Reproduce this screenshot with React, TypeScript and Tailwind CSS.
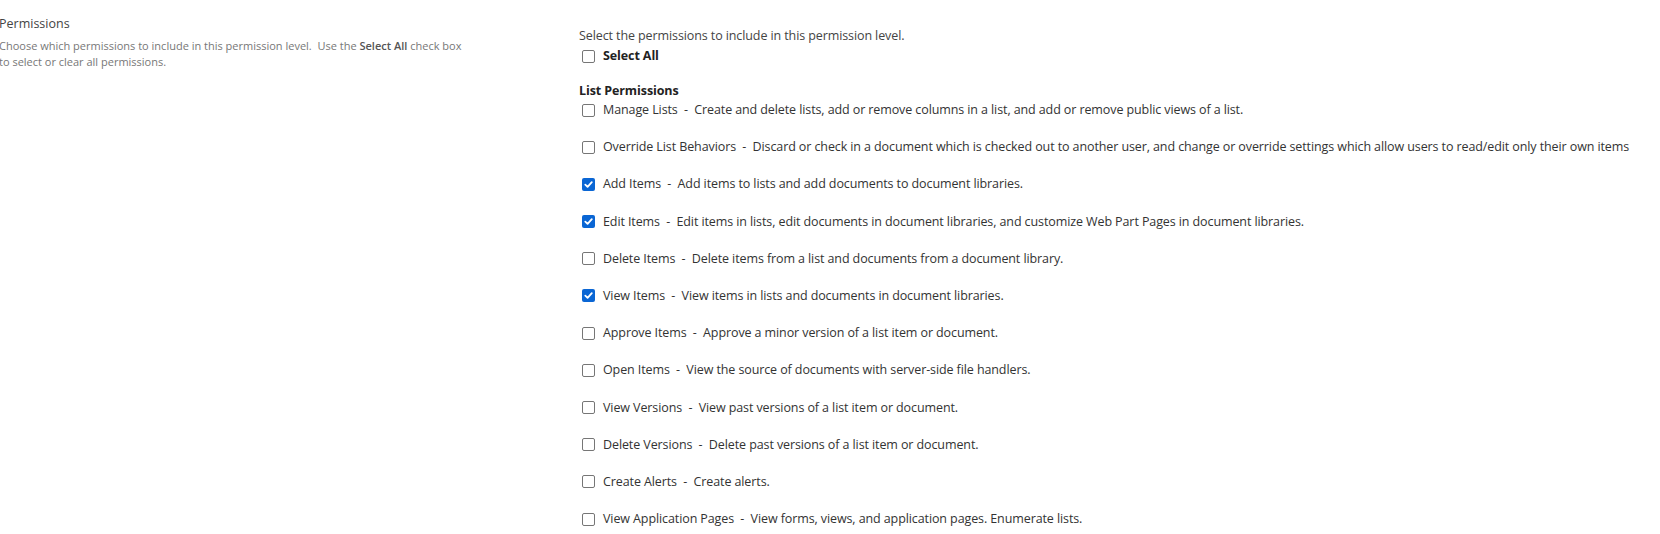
const permissions = [
  { name: 'Manage Lists', desc: 'Create and delete lists, add or remove columns in a list, and add or remove public views of a list.', checked: false },
  { name: 'Override List Behaviors', desc: 'Discard or check in a document which is checked out to another user, and change or override settings which allow users to read/edit only their own items', checked: false },
  { name: 'Add Items', desc: 'Add items to lists and add documents to document libraries.', checked: true },
  { name: 'Edit Items', desc: 'Edit items in lists, edit documents in document libraries, and customize Web Part Pages in document libraries.', checked: true },
  { name: 'Delete Items', desc: 'Delete items from a list and documents from a document library.', checked: false },
  { name: 'View Items', desc: 'View items in lists and documents in document libraries.', checked: true },
  { name: 'Approve Items', desc: 'Approve a minor version of a list item or document.', checked: false },
  { name: 'Open Items', desc: 'View the source of documents with server-side file handlers.', checked: false },
  { name: 'View Versions', desc: 'View past versions of a list item or document.', checked: false },
  { name: 'Delete Versions', desc: 'Delete past versions of a list item or document.', checked: false },
  { name: 'Create Alerts', desc: 'Create alerts.', checked: false },
  { name: 'View Application Pages', desc: 'View forms, views, and application pages. Enumerate lists.', checked: false },
];

function Box({ checked }: { checked: boolean }) {
  if (checked) {
    return (
      <span className="ml-[3px] flex h-[13px] w-[13px] shrink-0 items-center justify-center rounded-[2px] bg-[#0a66d4]">
        <svg viewBox="0 0 12 12" className="h-[11px] w-[11px]" fill="none" stroke="white" strokeWidth="2" strokeLinecap="round" strokeLinejoin="round">
          <path d="M2.5 6.2 L5 8.6 L9.6 3.4" />
        </svg>
      </span>
    );
  }
  return <span className="ml-[3px] block h-[13px] w-[13px] shrink-0 rounded-[2px] border border-[#767676] bg-white" />;
}

export default function App() {
  return (
    <div className="flex h-[534px] w-[1660px] overflow-hidden bg-white text-[#333] font-['Open_Sans',sans-serif]">
      <div className="-ml-px w-[580px] shrink-0 pt-[15px]">
        <div className="text-[12.5px] leading-[18px] text-[#444]">Permissions</div>
        <p className="mt-[5px] w-[468px] text-[11px] leading-[16px] text-[#777]">
          Choose which permissions to include in this permission level.&nbsp; Use the <b className="font-semibold text-[#555]">Select All</b> check box to select or clear all permissions.
        </p>
      </div>
      <div className="pt-[27px] text-[12.5px] leading-[18px] tracking-[-0.1px]">
        <div className="text-[#444]">Select the permissions to include in this permission level.</div>
        <div className="mt-[2px] flex h-[18px] items-center gap-[8px]">
          <Box checked={false} />
          <span className="font-bold text-[#222]">Select All</span>
        </div>
        <div className="mt-[17px] font-bold text-[#222]">List Permissions</div>
        <div className="mt-px">
          {permissions.map((p) => (
            <div key={p.name} className="flex h-[37.2px] items-start">
              <div className="flex h-[18px] items-center gap-[8px] whitespace-nowrap">
                <Box checked={p.checked} />
                <span>
                  {p.name}&nbsp; -&nbsp; {p.desc}
                </span>
              </div>
            </div>
          ))}
        </div>
      </div>
    </div>
  );
}
